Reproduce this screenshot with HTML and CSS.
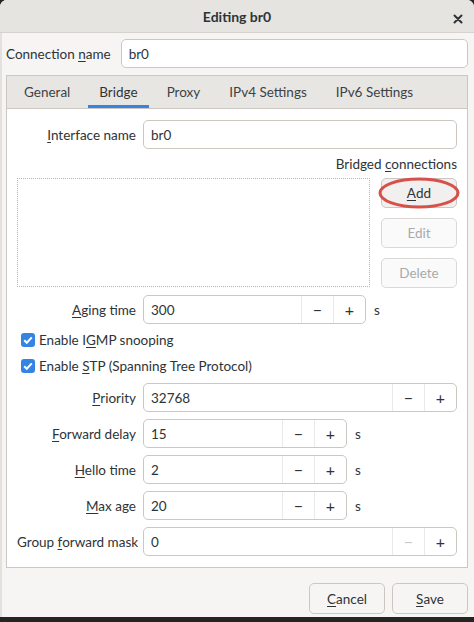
FILE: index.html
```html
<!DOCTYPE html>
<html lang="en">
<head>
    <meta charset="UTF-8">
    <meta name="viewport" content="width=device-width, initial-scale=1.0">
    <title>Editing br0</title>
    <link rel="stylesheet" href="styles.css">
</head>
<body>
<div class="window">
    <div class="titlebar">
        <span class="title">Editing br0</span>
        <span class="close">
            <svg width="10" height="10" viewBox="0 0 10 10"><path d="M1.5 1.5 L8.5 8.5 M8.5 1.5 L1.5 8.5" stroke="#2e3436" stroke-width="2" stroke-linecap="round"/></svg>
        </span>
    </div>
    <div class="main">
        <div class="conn-row">
            <label class="conn-label">Connection <u>n</u>ame</label>
            <div class="entry grow">br0</div>
        </div>

        <div class="notebook">
            <div class="tabs">
                <div class="tab">General</div>
                <div class="tab active">Bridge</div>
                <div class="tab">Proxy</div>
                <div class="tab">IPv4 Settings</div>
                <div class="tab">IPv6 Settings</div>
            </div>
            <div class="page">
                <div class="field">
                    <label class="lbl"><u>I</u>nterface name</label>
                    <div class="entry grow">br0</div>
                </div>

                <div class="bridged-title">Bridged <u>c</u>onnections</div>
                <div class="bridged">
                    <div class="list"></div>
                    <div class="list-buttons">
                        <div class="btn add"><u>A</u>dd
                            <svg class="ring" width="84" height="36" viewBox="0 0 84 36"><ellipse cx="42" cy="17" rx="39" ry="14" fill="none" stroke="#d8504a" stroke-width="3"/></svg>
                        </div>
                        <div class="btn disabled">Edit</div>
                        <div class="btn disabled">Delete</div>
                    </div>
                </div>

                <div class="field aging">
                    <label class="lbl"><u>A</u>ging time</label>
                    <div class="spin w-aging">
                        <span class="value">300</span>
                        <span class="sbtn">&minus;</span>
                        <span class="sbtn">+</span>
                    </div>
                    <span class="unit">s</span>
                </div>

                <div class="check-row">
                    <span class="check"><svg width="14" height="14" viewBox="0 0 14 14"><path d="M3.2 7.2 L5.8 9.8 L10.8 4.4" fill="none" stroke="#fff" stroke-width="2"/></svg></span>
                    <span>Enable I<u>G</u>MP snooping</span>
                </div>
                <div class="check-row">
                    <span class="check"><svg width="14" height="14" viewBox="0 0 14 14"><path d="M3.2 7.2 L5.8 9.8 L10.8 4.4" fill="none" stroke="#fff" stroke-width="2"/></svg></span>
                    <span>Enable <u>S</u>TP (Spanning Tree Protocol)</span>
                </div>

                <div class="field first">
                    <label class="lbl"><u>P</u>riority</label>
                    <div class="spin grow">
                        <span class="value">32768</span>
                        <span class="sbtn">&minus;</span>
                        <span class="sbtn">+</span>
                    </div>
                </div>
                <div class="field">
                    <label class="lbl"><u>F</u>orward delay</label>
                    <div class="spin w-short">
                        <span class="value">15</span>
                        <span class="sbtn">&minus;</span>
                        <span class="sbtn">+</span>
                    </div>
                    <span class="unit">s</span>
                </div>
                <div class="field">
                    <label class="lbl"><u>H</u>ello time</label>
                    <div class="spin w-short">
                        <span class="value">2</span>
                        <span class="sbtn">&minus;</span>
                        <span class="sbtn">+</span>
                    </div>
                    <span class="unit">s</span>
                </div>
                <div class="field">
                    <label class="lbl"><u>M</u>ax age</label>
                    <div class="spin w-short">
                        <span class="value">20</span>
                        <span class="sbtn">&minus;</span>
                        <span class="sbtn">+</span>
                    </div>
                    <span class="unit">s</span>
                </div>
                <div class="field last">
                    <label class="lbl">Group <u>f</u>orward mask</label>
                    <div class="spin grow">
                        <span class="value">0</span>
                        <span class="sbtn off">&minus;</span>
                        <span class="sbtn">+</span>
                    </div>
                </div>
            </div>
        </div>

        <div class="actions">
            <div class="btn big"><u>C</u>ancel</div>
            <div class="btn big"><u>S</u>ave</div>
        </div>
    </div>
</div>
</body>
</html>
```

FILE: styles.css
```css
html, body {
    margin: 0;
    padding: 0;
    background: #242424;
}
body {
    font-family: Lato, "Noto Sans", sans-serif;
    font-size: 13.5px;
    color: #2e3436;
}
u {
    text-decoration: underline;
    text-underline-offset: 2px;
    text-decoration-thickness: 1px;
}
.window {
    width: 474px;
    height: 617px;
    background: #f6f5f4;
    border-radius: 7px 7px 0 0;
    overflow: hidden;
    box-shadow: inset 2px 0 0 #e3e1de;
}
.titlebar {
    height: 32px;
    background: #e6e4e1;
    border-bottom: 1px solid #d6d2ce;
    display: flex;
    align-items: center;
    justify-content: center;
    position: relative;
}
.title {
    font-weight: bold;
    font-size: 14px;
}
.close {
    position: absolute;
    right: 11px;
    top: 11px;
}
.main {
    padding: 6px 6px 0 6px;
}
.conn-row {
    display: flex;
    align-items: center;
    gap: 10px;
}
.conn-label {
    white-space: nowrap;
}
.entry {
    height: 27px;
    border: 1px solid #cdc7c2;
    border-radius: 5px;
    background: #fff;
    display: flex;
    align-items: center;
    padding-left: 7px;
    box-sizing: content-box;
}
.grow {
    flex: 1;
}
.notebook {
    margin-top: 7px;
    border: 1px solid #cdc7c2;
    background: #fff;
}
.tabs {
    display: flex;
    height: 32px;
    background: #e8e6e3;
    border-bottom: 1px solid #cdc7c2;
    padding-left: 6px;
}
.tab {
    padding: 0 11px;
    margin-right: 7px;
    display: flex;
    align-items: center;
    color: #3d4345;
}
.tab.active {
    box-shadow: inset 0 -3px 0 #3584e4;
    color: #2e3436;
}
.page {
    padding: 11px 10px 11px 10px;
}
.field {
    display: flex;
    align-items: center;
    margin-bottom: 7px;
}
.field.aging {
    margin-bottom: 3px;
}
.field.last {
    margin-bottom: 0;
}
.lbl {
    width: 119px;
    text-align: right;
    margin-right: 7px;
    flex-shrink: 0;
    white-space: nowrap;
}
.bridged-title {
    text-align: right;
    margin-top: 1px;
    height: 22px;
    line-height: 16px;
}
.bridged {
    display: flex;
    gap: 11px;
    margin-bottom: 7px;
}
.list {
    flex: 1;
    height: 107px;
    border: 1px dotted #b9b6b2;
    background: #fff;
}
.list-buttons {
    width: 76px;
    display: flex;
    flex-direction: column;
    gap: 10px;
}
.btn {
    height: 28px;
    border: 1px solid #cdc7c2;
    border-radius: 5px;
    background: #f6f5f4;
    display: flex;
    align-items: center;
    justify-content: center;
    position: relative;
}
.btn.disabled {
    color: #a7abab;
    background: #fafafa;
    border-color: #dcd8d5;
}
.btn.add {
    background: #f1f0ee;
}
.ring {
    position: absolute;
    left: -5px;
    top: -3px;
}
.spin {
    height: 27px;
    border: 1px solid #cdc7c2;
    border-radius: 5px;
    background: #fff;
    display: flex;
    align-items: stretch;
}
.value {
    flex: 1;
    padding-left: 7px;
    display: flex;
    align-items: center;
}
.sbtn {
    width: 31px;
    border-left: 1px solid #ebe9e7;
    display: flex;
    align-items: center;
    justify-content: center;
    font-size: 16px;
}
.sbtn.off {
    color: #c6c8c8;
}
.w-aging {
    width: 221px;
}
.w-short {
    width: 202px;
}
.unit {
    margin-left: 8px;
}
.check-row {
    display: flex;
    align-items: center;
    height: 26px;
    padding-left: 4px;
    gap: 4px;
}
.check {
    width: 14px;
    height: 14px;
    border-radius: 3px;
    background: #3584e4;
    display: flex;
}
.field.first {
    margin-top: 4px;
}
.actions {
    display: flex;
    justify-content: flex-end;
    gap: 7px;
    margin-top: 15px;
}
.btn.big {
    width: 74px;
    height: 29px;
}
```
